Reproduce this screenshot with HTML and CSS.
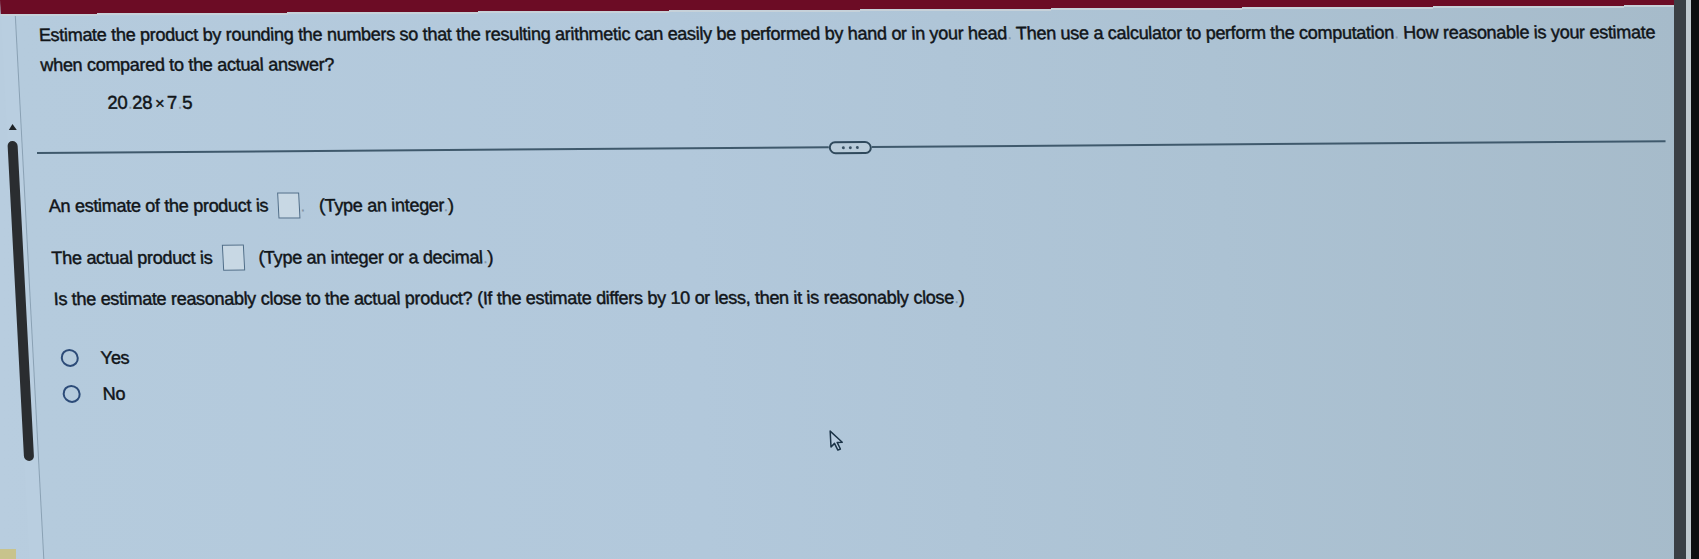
FILE: index.html
```html
<!DOCTYPE html>
<html lang="en">
<head>
<meta charset="utf-8">
<title>Estimate the product</title>
<link rel="stylesheet" href="styles.css">
</head>
<body>
<div class="monitor">
  <div class="viewport">
    <div class="tilt">
      <div class="titlebar"></div>
      <div class="frame">
        <aside class="gutter">
          <span class="arrow-up"></span>
          <span class="thumb"></span>
        </aside>
        <main class="panel">
          <section class="question">
            <div>Estimate the product by rounding the numbers so that the resulting arithmetic can easily be performed by hand or in your head<span class="dim">.</span> Then use a calculator to perform the computation<span class="dim">.</span> How reasonable is your estimate</div>
            <div>when compared to the actual answer?</div>
            <div class="expr">20<span class="dim">.</span>28<span class="times">×</span>7<span class="dim">.</span>5</div>
          </section>
          <div class="divider">
            <span class="rule rule-left"></span>
            <span class="more"><i></i><i></i><i></i></span>
            <span class="rule rule-right"></span>
          </div>
          <section class="answer">
            <div class="row">An estimate of the product is<span class="box"></span><span class="dim">.</span><span class="hint">(Type an integer<span class="dim">.</span>)</span></div>
            <div class="row row-actual">The actual product is<span class="box"></span><span class="hint">(Type an integer or a decimal<span class="dim">.</span>)</span></div>
            <div class="row row-close">Is the estimate reasonably close to the actual product? (If the estimate differs by 10 or less, then it is reasonably close<span class="dim">.</span>)</div>
            <div class="choices">
              <label class="choice"><span class="radio"></span><span>Yes</span></label>
              <label class="choice"><span class="radio"></span><span>No</span></label>
            </div>
          </section>
          <svg class="cursor" width="15" height="22" viewBox="0 0 15 22" aria-hidden="true">
            <path d="M1.5 1.5 L1.5 17.5 L5.2 13.8 L8.2 20.5 L10.8 19.4 L7.9 12.8 L13 12.6 Z" fill="#b9cde0" stroke="#1b3347" stroke-width="1.5" stroke-linejoin="round"/>
          </svg>
        </main>
      </div>
    </div>
    <span class="sticker"></span>
  </div>
  <div class="bezel">
    <span class="edge-dark"></span>
    <span class="edge-light"></span>
    <span class="edge-black"></span>
  </div>
</div>
</body>
</html>
```
FILE: styles.css
```css
html, body {
  margin: 0;
  padding: 0;
}

body {
  width: 1699px;
  height: 559px;
  overflow: hidden;
  background: #0d0f10;
  font-family: "Liberation Sans", Arial, sans-serif;
}

.monitor {
  display: flex;
  height: 559px;
}

.viewport {
  position: relative;
  flex: none;
  width: 1674px;
  height: 559px;
  overflow: hidden;
  background: linear-gradient(90deg, #b8cddf 0%, #b2c8db 40%, #acc2d3 72%, #a6bbca 100%);
}

.tilt {
  display: flex;
  flex-direction: column;
  height: 600px;
  transform: skew(3deg, -0.1deg);
  transform-origin: 0 0;
}

.titlebar {
  flex: none;
  height: 16px;
  background: linear-gradient(179.8deg, #6c0c25 0, #6c0c25 14px, #c6d1d9 14px, #c6d1d9 16px, transparent 16px);
}

.frame {
  display: flex;
  flex: 1;
}

.gutter {
  flex: none;
  width: 14px;
  display: flex;
  flex-direction: column;
  align-items: flex-start;
  padding-top: 108px;
  box-sizing: border-box;
  background: #b9cee0;
}

.arrow-up {
  margin-left: 1.5px;
  width: 0;
  height: 0;
  border-left: 4px solid transparent;
  border-right: 4px solid transparent;
  border-bottom: 6px solid #1e2226;
}

.thumb {
  margin-top: 11px;
  width: 9.5px;
  height: 320px;
  border-radius: 5px;
  background: #2a2d30;
}

.panel {
  position: relative;
  flex: 1;
  border-left: 1px solid #8aa1b4;
  background: linear-gradient(90deg, #b5cbdd 0%, #b2c8db 40%, #acc2d3 72%, #a6bbca 100%);
  color: #111519;
  font-size: 18px;
  letter-spacing: -0.3px;
  -webkit-text-stroke: 0.45px #111519;
}

.dim {
  color: #8494a4;
  -webkit-text-stroke: 0;
}

.question {
  padding: 4px 0 0 22px;
  line-height: 30px;
  white-space: nowrap;
}

.expr {
  margin-top: 8.5px;
  padding-left: 65px;
  line-height: 27px;
  font-size: 18.5px;
}

.times {
  font-size: 16px;
  margin: 0 3px;
}

.divider {
  display: flex;
  align-items: center;
  height: 14px;
  margin: 29.5px 16px 0 14px;
  transform: rotate(-0.31deg);
  transform-origin: 0 50%;
}

.rule {
  height: 2px;
  background: #3f596c;
}

.rule-left {
  width: 791.5px;
}

.rule-right {
  flex: 1;
}

.more {
  flex: none;
  display: flex;
  align-items: center;
  justify-content: center;
  gap: 4px;
  width: 43px;
  height: 13px;
  box-sizing: border-box;
  border: 2px solid #2f495c;
  border-radius: 7px;
  background: #b9ccda;
}

.more i {
  width: 3px;
  height: 3px;
  border-radius: 50%;
  background: #3a5264;
}

.answer {
  display: flex;
  flex-direction: column;
  margin-top: 32.5px;
  padding-left: 23px;
}

.row {
  display: flex;
  align-items: center;
  height: 27px;
  white-space: nowrap;
}

.row-actual {
  margin-top: 25px;
}

.row-close {
  margin-top: 14px;
}

.box {
  flex: none;
  width: 22px;
  height: 26px;
  margin-left: 10px;
  box-sizing: border-box;
  border: 1px solid #4f6d88;
  background: #c8d8e4;
}

.hint {
  margin-left: 14px;
}

.choices {
  display: flex;
  flex-direction: column;
  gap: 9px;
  margin-top: 32px;
  padding-left: 4px;
}

.choice {
  display: flex;
  align-items: center;
  gap: 22px;
  height: 27px;
}

.radio {
  flex: none;
  width: 18px;
  height: 18px;
  box-sizing: border-box;
  border: 2px solid #2c4b78;
  border-radius: 50%;
}

.cursor {
  position: absolute;
  left: 791px;
  top: 415px;
}

.sticker {
  position: absolute;
  left: 0;
  bottom: 0;
  width: 16px;
  height: 10px;
  background: #c8c38c;
}

.bezel {
  flex: none;
  display: flex;
  width: 25px;
  height: 559px;
}

.edge-dark {
  width: 12px;
  background: #3a3f44;
}

.edge-light {
  width: 5px;
  background: #c0c9ce;
}

.edge-black {
  width: 8px;
  background: #0d0f10;
}
```
